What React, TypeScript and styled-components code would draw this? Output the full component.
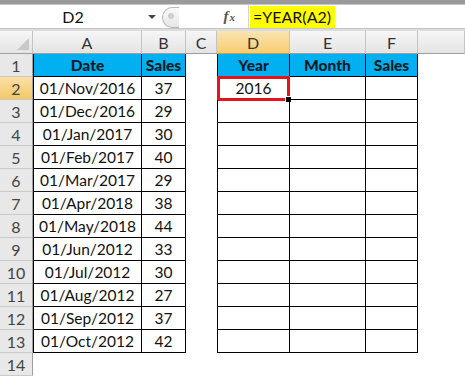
import React from 'react';
import styled, { createGlobalStyle, css } from 'styled-components';

const GlobalStyle = createGlobalStyle`
  html, body { margin: 0; padding: 0; background: #ffffff; }
  body { font-family: Lato, "Liberation Sans", sans-serif; }
`;

const COLS = [33, 109, 44, 31, 73, 76, 52, 47];
const LETTERS = ['A', 'B', 'C', 'D', 'E', 'F', ''];

const Sheet = styled.div`
  width: 465px;
  height: 377px;
  overflow: hidden;
  background: #ffffff;
`;

const TopStrip = styled.div`
  height: 4px;
  background: #9a9a9a;
  border-bottom: 1px solid #c8c8c8;
`;

const FormulaBar = styled.div`
  display: flex;
  height: 23px;
  background: #ffffff;
  border-bottom: 1px solid #c6c6c6;
`;

const NameBox = styled.div`
  width: 146px;
  display: flex;
  align-items: center;
  justify-content: center;
  font-size: 16px;
  color: #111;
`;

const ArrowWrap = styled.div`
  display: flex;
  align-items: center;
`;

const DropArrow = styled.div`
  width: 0;
  height: 0;
  border-left: 4px solid transparent;
  border-right: 4px solid transparent;
  border-top: 4px solid #444;
  margin: 0 6px 0 2px;
`;

const Splitter = styled.div`
  width: 16px;
  height: 19px;
  margin-top: 2px;
  border: 1px solid #b8b8b8;
  border-right: none;
  border-radius: 10px 0 0 10px;
  background: linear-gradient(#fafafa, #e6e6e6);
  position: relative;
  &::after {
    content: '';
    position: absolute;
    left: 5px;
    top: 5px;
    width: 6px;
    height: 6px;
    border-radius: 50%;
    background: #cfcfcf;
  }
`;

const FxArea = styled.div`
  width: 70px;
  display: flex;
  align-items: center;
  justify-content: flex-end;
  padding-right: 13px;
  box-sizing: border-box;
  border-right: 1px solid #d4d4d4;
  font-family: "Liberation Serif", serif;
  font-style: italic;
  font-size: 15px;
  font-weight: bold;
  color: #555;
  sub {
    font-size: 11px;
    vertical-align: baseline;
    margin-left: 1px;
  }
`;

const FormulaInput = styled.div`
  flex: 1;
  display: flex;
  align-items: center;
  padding-left: 1px;
`;

const Highlight = styled.span`
  background: #ffff00;
  font-size: 16px;
  color: #111;
  padding: 3px 4px 3px 3px;
  line-height: 16px;
`;

const Gap = styled.div`
  height: 2px;
  background: #dcdcdc;
`;

const Grid = styled.div`
  display: grid;
  grid-template-columns: ${COLS.map((c) => `${c}px`).join(' ')};
  grid-auto-rows: 23px;
`;

const ColHead = styled.div<{ $sel?: boolean }>`
  box-sizing: border-box;
  display: flex;
  align-items: center;
  justify-content: center;
  font-size: 16px;
  color: #333;
  border-right: 1px solid #c4c4c4;
  border-bottom: 1px solid #9e9e9e;
  background: ${(p) =>
    p.$sel
      ? 'linear-gradient(#fbe4b3, #f6cd70)'
      : 'linear-gradient(#f6f6f6, #e4e4e4)'};
  ${(p) => p.$sel && css`border-bottom-color: #c6a04c;`}
`;

const Corner = styled(ColHead)`
  position: relative;
  &::after {
    content: '';
    position: absolute;
    right: 3px;
    bottom: 3px;
    width: 0;
    height: 0;
    border-left: 12px solid transparent;
    border-bottom: 12px solid #c9c9c9;
  }
`;

const RowHead = styled.div<{ $sel?: boolean }>`
  box-sizing: border-box;
  display: flex;
  align-items: center;
  justify-content: center;
  font-size: 16px;
  color: #444;
  border-right: 1px solid #9e9e9e;
  border-bottom: 1px solid #c9c9c9;
  background: ${(p) => (p.$sel ? 'linear-gradient(#fbe0a6, #f4c867)' : '#e8e8e8')};
`;

const Cell = styled.div<{
  $head?: boolean;
  $l?: boolean;
  $box?: boolean;
}>`
  box-sizing: border-box;
  display: flex;
  align-items: center;
  justify-content: center;
  font-size: 15.5px;
  color: #111;
  position: relative;
  ${(p) =>
    p.$box &&
    css`
      border-right: 1px solid #000;
      border-bottom: 1px solid #000;
    `}
  ${(p) => p.$box && p.$l && css`border-left: 1px solid #000;`}
  ${(p) =>
    p.$head &&
    css`
      background: #00b0f0;
      font-weight: 900;
      color: #0d1a24;
    `}
`;

const ActiveFrame = styled.div`
  position: absolute;
  left: -1px;
  top: -1px;
  right: -1px;
  bottom: -2px;
  border: 3px solid #e3141b;
  pointer-events: none;
  &::after {
    content: '';
    position: absolute;
    right: -5px;
    bottom: -5px;
    width: 5px;
    height: 5px;
    background: #000;
    border: 1px solid #fff;
  }
`;

const DATA: [string, string][] = [
  ['01/Nov/2016', '37'],
  ['01/Dec/2016', '29'],
  ['01/Jan/2017', '30'],
  ['01/Feb/2017', '40'],
  ['01/Mar/2017', '29'],
  ['01/Apr/2018', '38'],
  ['01/May/2018', '44'],
  ['01/Jun/2012', '33'],
  ['01/Jul/2012', '30'],
  ['01/Aug/2012', '27'],
  ['01/Sep/2012', '37'],
  ['01/Oct/2012', '42'],
];

export default function App() {
  return (
    <Sheet>
      <GlobalStyle />
      <TopStrip />
      <FormulaBar>
        <NameBox>D2</NameBox>
        <ArrowWrap>
          <DropArrow />
        </ArrowWrap>
        <Splitter />
        <FxArea>
          f<sub>x</sub>
        </FxArea>
        <FormulaInput>
          <Highlight>=YEAR(A2)</Highlight>
        </FormulaInput>
      </FormulaBar>
      <Gap />
      <Grid>
        <Corner />
        {LETTERS.map((l) => (
          <ColHead key={l || 'x'} $sel={l === 'D'}>
            {l}
          </ColHead>
        ))}

        <RowHead>1</RowHead>
        <Cell $box $head $l>Date</Cell>
        <Cell $box $head>Sales</Cell>
        <Cell />
        <Cell $box $head $l>Year</Cell>
        <Cell $box $head>Month</Cell>
        <Cell $box $head>Sales</Cell>
        <Cell />

        {DATA.map(([date, sales], i) => (
          <React.Fragment key={date}>
            <RowHead $sel={i === 0}>{i + 2}</RowHead>
            <Cell $box $l>{date}</Cell>
            <Cell $box>{sales}</Cell>
            <Cell />
            <Cell $box $l>
              {i === 0 && '2016'}
              {i === 0 && <ActiveFrame />}
            </Cell>
            <Cell $box />
            <Cell $box />
            <Cell />
          </React.Fragment>
        ))}

        <RowHead>14</RowHead>
      </Grid>
    </Sheet>
  );
}
